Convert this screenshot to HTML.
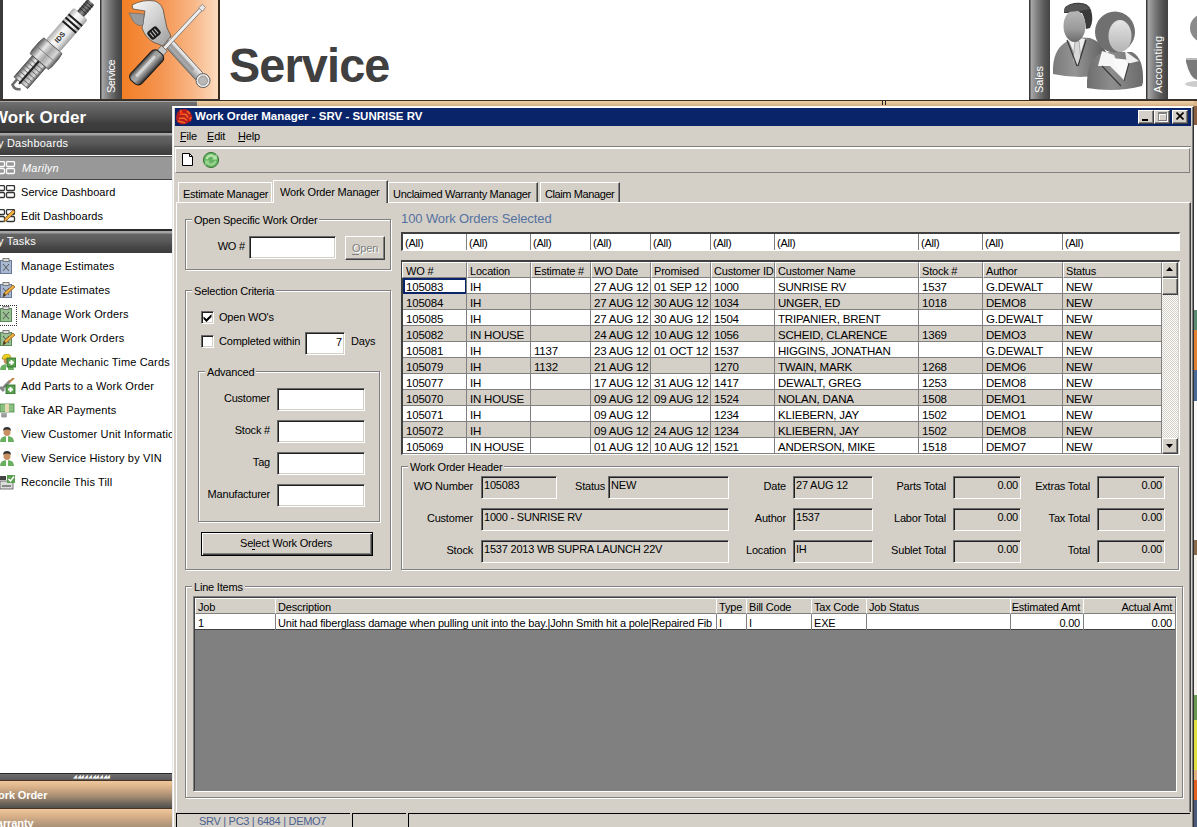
<!DOCTYPE html>
<html><head><meta charset="utf-8"><style>
*{margin:0;padding:0;box-sizing:border-box}
html,body{width:1197px;height:827px;overflow:hidden;background:#fff}
body{position:relative;font-family:"Liberation Sans",sans-serif;font-size:11px;color:#000}
.a{position:absolute}
.t{position:absolute;white-space:nowrap;line-height:1}
.strip{position:absolute;top:0;height:99px;background:linear-gradient(90deg,#3a3a3a 0,#3a3a3a 1px,#a8a8a8 2px,#7a7a7a 9px,#555 16px,#444 21px)}
.vt{position:absolute;transform-origin:0 0;transform:rotate(-90deg);color:#fff;font-size:11px;white-space:nowrap;line-height:11px}
.sunk{position:absolute;background:#fff;border-top:1px solid #6a6a6a;border-left:1px solid #6a6a6a;border-bottom:1px solid #fff;border-right:1px solid #fff;box-shadow:inset 1px 1px 0 #202020,inset -1px -1px 0 #d4d0c8}
.btn{position:absolute;background:#d4d0c8;border-top:1px solid #fff;border-left:1px solid #fff;border-right:1px solid #404040;border-bottom:1px solid #404040;box-shadow:inset -1px -1px 0 #808080;text-align:center}
</style></head><body>
<div class="a" style="left:0;top:0;width:3px;height:100px;background:#3a3a3a"></div>
<div class="a" style="left:3px;top:0;width:97px;height:99px;background:#fff"></div>
<svg class="a" style="left:3px;top:0" width="97" height="99" viewBox="0 0 97 99">
<defs>
<linearGradient id="gm" x1="0" x2="1"><stop offset="0" stop-color="#5a5a5a"/><stop offset=".3" stop-color="#e8e8e8"/><stop offset=".55" stop-color="#a8a8a8"/><stop offset=".8" stop-color="#d8d8d8"/><stop offset="1" stop-color="#555"/></linearGradient>
<linearGradient id="gc" x1="0" x2="1"><stop offset="0" stop-color="#b0b0b0"/><stop offset=".35" stop-color="#fafafa"/><stop offset=".7" stop-color="#e8e8e8"/><stop offset="1" stop-color="#a0a0a0"/></linearGradient>
<linearGradient id="gt" x1="0" x2="1"><stop offset="0" stop-color="#333"/><stop offset=".5" stop-color="#8a8a8a"/><stop offset="1" stop-color="#333"/></linearGradient>
</defs>
<g transform="translate(48 48) rotate(41)">
<rect x="-4.5" y="-61" width="9" height="17" rx="1.5" fill="url(#gt)"/>
<path d="M-4.5 -58 H4.5 M-4.5 -55 H4.5 M-4.5 -52 H4.5 M-4.5 -49 H4.5" stroke="#222" stroke-width=".8"/>
<rect x="-9" y="-45" width="18" height="42" rx="2" fill="url(#gc)" stroke="#a0a0a0" stroke-width=".6"/>
<rect x="-9" y="-38" width="18" height="2" fill="#1a1a1a"/>
<rect x="-9" y="-33.5" width="18" height="2" fill="#1a1a1a"/>
<rect x="-9" y="-29" width="18" height="2" fill="#1a1a1a"/>
<text x="0" y="-12" font-size="7" font-weight="bold" text-anchor="middle" fill="#222" transform="rotate(-90 0 -14)" font-family="Liberation Sans">IDS</text>
<path d="M-12 -3 L12 -3 L13 3 L13 14 L12 18 L-12 18 L-13 14 L-13 3 Z" fill="url(#gm)" stroke="#555" stroke-width=".8"/>
<path d="M-13 8 H13" stroke="#777" stroke-width=".8"/>
<rect x="-9" y="18" width="18" height="28" fill="url(#gm)" stroke="#444" stroke-width=".8"/>
<path d="M-9 22 H9 M-9 26 H9 M-9 30 H9 M-9 34 H9 M-9 38 H9 M-9 42 H9" stroke="#666" stroke-width=".9"/>
<rect x="-1.5" y="18" width="2" height="30" fill="#222"/>
<path d="M-5 46 L-5 53 Q0 56 4 51" fill="none" stroke="#6a6a6a" stroke-width="2.6"/>
</g></svg>
<div class="strip" style="left:100px;width:22px"></div>
<div class="vt" style="left:106px;top:93px;letter-spacing:-0.5px">Service</div>
<div class="a" style="left:122px;top:0;width:96px;height:99px;background:linear-gradient(90deg,#f27f25,#f59450 40%,#f8b888 75%,#fcdcc0)"></div>
<svg class="a" style="left:121px;top:0" width="97" height="99" viewBox="0 0 97 99">
<defs>
<linearGradient id="gw" x1="0" y1="0" x2="0" y2="1"><stop offset="0" stop-color="#f4f4f4"/><stop offset=".45" stop-color="#c8c8c8"/><stop offset="1" stop-color="#8a8a8a"/></linearGradient>
<linearGradient id="gwh" x1="0" y1="0" x2="1" y2="1"><stop offset="0" stop-color="#fafafa"/><stop offset=".5" stop-color="#d0d0d0"/><stop offset="1" stop-color="#9a9a9a"/></linearGradient>
<linearGradient id="gh" x1="0" y1="0" x2="0" y2="1"><stop offset="0" stop-color="#3a3a3a"/><stop offset=".25" stop-color="#9a9a9a"/><stop offset=".55" stop-color="#a8a8a8"/><stop offset=".8" stop-color="#6a6a6a"/><stop offset="1" stop-color="#2a2a2a"/></linearGradient>
</defs>
<g transform="translate(36 30) rotate(47.7)">
<rect x="6" y="-5" width="58" height="10" rx="2" fill="url(#gw)" stroke="#5a5a5a" stroke-width=".8"/>
<rect x="14" y="-1.5" width="40" height="3" fill="#a0a0a0"/>
<circle cx="68.4" cy="0" r="7" fill="#e8e8e8" stroke="#5a5a5a" stroke-width=".9"/>
<circle cx="68.4" cy="0" r="4.5" fill="#b8b8b8" stroke="#777" stroke-width=".6"/>
</g>
<path d="M11 5 Q22 -1 34 1 Q42 4 43 14 L46 28 L50 36 L42 46 L32 42 Q24 37 21 28 L23 17 L24 11 L12 9 Z" fill="url(#gwh)" stroke="#6a5a4a" stroke-width=".9"/>
<path d="M8 13 L23 14 L22 25 Q17 27 12 21 Z" fill="#9a9a9a" stroke="#6a6a6a" stroke-width=".7"/>
<g transform="translate(33 33) rotate(-40)"><rect x="-6" y="-5" width="12" height="10" rx="2.5" fill="#1a1a1a"/><path d="M-3 -3 V3 M0 -3 V3 M3 -3 V3" stroke="#bbb" stroke-width="1.1"/></g>
<g transform="translate(12 82) rotate(-47)">
<rect x="44" y="-1.8" width="56" height="3.6" fill="#ececec" stroke="#6a6a6a" stroke-width=".7"/>
<path d="M99 -2.6 L104 -2.2 L104 2.2 L99 2.6 Z" fill="#e8e8e8" stroke="#6a6a6a" stroke-width=".6"/>
<rect x="39" y="-4" width="7" height="8" fill="#c8c8c8" stroke="#555" stroke-width=".7"/>
<rect x="0" y="-7.5" width="40" height="15" rx="5" fill="url(#gh)" stroke="#1a1a1a" stroke-width="1"/>
<rect x="6" y="-3" width="28" height="3" rx="1.5" fill="#e0e0e0" opacity=".8"/>
</g></svg>
<div class="a" style="left:218px;top:0;width:2px;height:100px;background:#3a2a1a"></div>
<div class="t" style="left:229px;top:41px;font-size:49px;font-weight:bold;color:#404040;letter-spacing:-0.9px;transform:scaleX(0.955);transform-origin:0 0">Service</div>
<div class="strip" style="left:1029px;width:21px"></div>
<div class="vt" style="left:1034px;top:93px;letter-spacing:-0.1px">Sales</div>
<div class="a" style="left:1050px;top:0;width:96px;height:99px;background:#fff"></div>
<svg class="a" style="left:1050px;top:0" width="96" height="99" viewBox="0 0 96 99">
<defs>
<linearGradient id="gfm" x1="0" y1="0" x2="0" y2="1"><stop offset="0" stop-color="#b8b8b8"/><stop offset=".6" stop-color="#9a9a9a"/><stop offset="1" stop-color="#6a6a6a"/></linearGradient>
<linearGradient id="gfw" x1="0" y1="0" x2="0" y2="1"><stop offset="0" stop-color="#e4e4e4"/><stop offset="1" stop-color="#b4b4b4"/></linearGradient>
<linearGradient id="gbm" x1="0" x2="1"><stop offset="0" stop-color="#7a7a7a"/><stop offset=".4" stop-color="#959595"/><stop offset="1" stop-color="#5a5a5a"/></linearGradient>
<linearGradient id="gbw" x1="0" x2="1"><stop offset="0" stop-color="#6e6e6e"/><stop offset=".45" stop-color="#8e8e8e"/><stop offset="1" stop-color="#6a6a6a"/></linearGradient>
</defs>
<path d="M3 74 Q2 50 16 42 L26 37 L40 38 Q52 42 56 52 L58 74 Q30 80 3 74 Z" fill="url(#gbm)"/>
<path d="M18 39 L26 37 L35 39 L28 62 Z" fill="#f0f0f0"/>
<path d="M25 41 L29 41 L31 60 L27 66 L23 60 Z" fill="#d8d8d8" stroke="#888" stroke-width=".6"/>
<path d="M17 40 L27 66 M36 40 L28 66" stroke="#3a3a3a" stroke-width="1.2" fill="none"/>
<path d="M14 13 Q13 5 24 3 Q38 1 41 10 Q44 20 40 28 L36 29 Q35 18 32 13 L16 13 Z" fill="#3a3a3a"/>
<ellipse cx="24.5" cy="26" rx="11" ry="16" fill="url(#gfm)"/>
<path d="M14 12 Q13 6 24 4 Q36 3 40 9 Q32 11 16 12 Z" fill="#555"/>
<path d="M37 88 Q36 60 50 54 L60 52 L82 52 Q94 58 93 82 L92 86 Q66 93 37 88 Z" fill="url(#gbw)"/>
<path d="M48 66 L52 51 L64 55 L74 80 L60 66 Z" fill="#f6f6f6"/><path d="M62 58 L74 81 L80 60 Z" fill="#fafafa"/><path d="M75 51 L89 61 L77 64 Z" fill="#f0f0f0"/>
<path d="M52 66 L71 86 M74 81 L79 63" stroke="#3a3a3a" stroke-width="1.1" fill="none"/>
<ellipse cx="65" cy="32" rx="20" ry="20.5" fill="#707070"/>
<ellipse cx="70" cy="36" rx="11.5" ry="16" fill="url(#gfw)"/>
</svg>
<div class="strip" style="left:1146px;width:22px"></div>
<div class="vt" style="left:1153px;top:93px;letter-spacing:0.3px">Accounting</div>
<svg class="a" style="left:1168px;top:0" width="29" height="99" viewBox="0 0 29 99">
<circle cx="36" cy="28" r="14" fill="#8a8a8a"/>
<path d="M18 58 H29 V80 Q22 78 18 62 Z" fill="#7a7a7a"/>
<rect x="18" y="58" width="11" height="2" fill="#bbb"/>
<ellipse cx="29" cy="84" rx="12" ry="3" fill="#ccc"/>
</svg>
<div class="a" style="left:0;top:100px;width:1197px;height:1px;background:#3a2e24"></div>
<div class="a" style="left:0;top:99px;width:220px;height:1px;background:#3a3430"></div>
<div class="a" style="left:1029px;top:99px;width:168px;height:1px;background:#3a3430"></div>
<div class="a" style="left:0;top:101px;width:197px;height:726px;background:#fff"></div>
<div class="a" style="left:197px;top:101px;width:1000px;height:5px;background:linear-gradient(#f2d4a8,#d2ae86)"></div><div class="a" style="left:197px;top:106px;width:1000px;height:1px;background:#fffaf0"></div>
<div class="a" style="left:196px;top:101px;width:1px;height:5px;background:#000"></div>
<div class="a" style="left:882px;top:101px;width:1px;height:4px;background:#222"></div>
<div class="a" style="left:885px;top:101px;width:1px;height:4px;background:#222"></div>
<div class="a" style="left:0;top:101px;width:197px;height:30px;background:linear-gradient(#a8a8a8 0,#a8a8a8 1px,#707070 1px,#5e5e5e 30%,#4e4e4e 55%,#3e3e3e 75%,#3a3a3a)"></div>
<div class="t" style="left:-8px;top:109px;font-size:17px;font-weight:bold;color:#fff;letter-spacing:0.1px">Work Order</div>
<div class="a" style="left:0;top:131px;width:197px;height:2px;background:#2a2a2a"></div>
<div class="a" style="left:0;top:133px;width:197px;height:22px;background:linear-gradient(#a4a4a4 0,#a4a4a4 2px,#646464 3px,#5a5a5a 45%,#484848 70%,#3c3c3c)"></div>
<div class="t" style="left:-2px;top:138px;font-size:11px;color:#fff;letter-spacing:0.2px">y Dashboards</div>
<div class="a" style="left:0;top:155px;width:197px;height:2px;background:#fff"></div>
<div class="a" style="left:0;top:156px;width:197px;height:1px;background:#555"></div>
<div class="a" style="left:0;top:157px;width:197px;height:22px;background:#989898"></div>
<div class="a" style="left:0;top:179px;width:197px;height:1px;background:#444"></div>
<svg class="a" style="left:0px;top:161px" width="16" height="14" viewBox="0 0 16 14"><rect x="-3.5" y="0.5" width="8" height="5" rx="1.2" fill="none" stroke="#fff" stroke-width="1.3"/><rect x="6.5" y="0.5" width="8" height="5" rx="1.2" fill="none" stroke="#fff" stroke-width="1.3"/><rect x="-3.5" y="7.5" width="8" height="5" rx="1.2" fill="none" stroke="#fff" stroke-width="1.3"/><rect x="6.5" y="7.5" width="8" height="5" rx="1.2" fill="none" stroke="#fff" stroke-width="1.3"/></svg>
<div class="t" style="left:22px;top:163px;font-size:11px;font-style:italic;color:#fff;letter-spacing:0.2px">Marilyn</div>
<svg class="a" style="left:0px;top:185px" width="16" height="14" viewBox="0 0 16 14"><rect x="-3.5" y="0.5" width="8" height="5" rx="1.2" fill="none" stroke="#333" stroke-width="1.3"/><rect x="6.5" y="0.5" width="8" height="5" rx="1.2" fill="none" stroke="#333" stroke-width="1.3"/><rect x="-3.5" y="7.5" width="8" height="5" rx="1.2" fill="none" stroke="#333" stroke-width="1.3"/><rect x="6.5" y="7.5" width="8" height="5" rx="1.2" fill="none" stroke="#333" stroke-width="1.3"/></svg>
<div class="t" style="left:21px;top:187px;font-size:11px;letter-spacing:0.05px">Service Dashboard</div>
<svg class="a" style="left:0px;top:209px" width="16" height="14" viewBox="0 0 16 14"><rect x="-3.5" y="0.5" width="8" height="5" rx="1.2" fill="none" stroke="#333" stroke-width="1.3"/><rect x="6.5" y="0.5" width="8" height="5" rx="1.2" fill="none" stroke="#333" stroke-width="1.3"/><rect x="-3.5" y="7.5" width="8" height="5" rx="1.2" fill="none" stroke="#333" stroke-width="1.3"/><rect x="6.5" y="7.5" width="8" height="5" rx="1.2" fill="none" stroke="#333" stroke-width="1.3"/></svg>
<svg class="a" style="left:0;top:207px" width="16" height="16" viewBox="0 0 16 16"><path d="M4 15 L5 11 L13 3 L15 5 L7 13 Z" fill="#f0b040" stroke="#8a5a20" stroke-width=".8"/></svg>
<div class="t" style="left:21px;top:211px;font-size:11px;letter-spacing:0.05px">Edit Dashboards</div>
<div class="a" style="left:0;top:229px;width:197px;height:2px;background:#2a2a2a"></div>
<div class="a" style="left:0;top:231px;width:197px;height:22px;background:linear-gradient(#a4a4a4 0,#a4a4a4 2px,#646464 3px,#5a5a5a 45%,#484848 70%,#3c3c3c)"></div>
<div class="t" style="left:-2px;top:236px;font-size:11px;color:#fff;letter-spacing:0.2px">y Tasks</div>
<svg class="a" style="left:0;top:258px" width="16" height="16" viewBox="0 0 16 16"><rect x="0.5" y="2.5" width="11" height="13" fill="#a8b8d0" stroke="#6a7a9a"/><rect x="3" y="0.5" width="6" height="3" fill="#ddd" stroke="#666" stroke-width=".8"/><path d="M3 6 L9 13 M9 6 L3 13" stroke="#555" stroke-width="1"/></svg>
<div class="t" style="left:21px;top:261px;font-size:11px;letter-spacing:0.15px">Manage Estimates</div>
<svg class="a" style="left:0;top:282px" width="16" height="16" viewBox="0 0 16 16"><rect x="0.5" y="2.5" width="11" height="13" fill="#a8b8d0" stroke="#6a7a9a"/><rect x="3" y="0.5" width="6" height="3" fill="#ddd" stroke="#666" stroke-width=".8"/><path d="M3 6 L9 13 M9 6 L3 13" stroke="#555" stroke-width="1"/><path d="M3 15 L4 11 L13 3 L15 5 L6 13 Z" fill="#f0b040" stroke="#8a5a20" stroke-width=".8"/><path d="M3 15 L4 11 L6 13 Z" fill="#333"/></svg>
<div class="t" style="left:21px;top:285px;font-size:11px;letter-spacing:0.15px">Update Estimates</div>
<svg class="a" style="left:0;top:306px" width="16" height="16" viewBox="0 0 16 16"><rect x="0.5" y="2.5" width="11" height="13" fill="#98c090" stroke="#5a8a5a"/><rect x="3" y="0.5" width="6" height="3" fill="#ddd" stroke="#666" stroke-width=".8"/><path d="M3 6 L9 13 M9 6 L3 13" stroke="#555" stroke-width="1"/></svg>
<div class="t" style="left:21px;top:309px;font-size:11px;letter-spacing:0.15px">Manage Work Orders</div>
<svg class="a" style="left:0;top:330px" width="16" height="16" viewBox="0 0 16 16"><rect x="0.5" y="2.5" width="11" height="13" fill="#98c090" stroke="#5a8a5a"/><rect x="3" y="0.5" width="6" height="3" fill="#ddd" stroke="#666" stroke-width=".8"/><path d="M3 6 L9 13 M9 6 L3 13" stroke="#555" stroke-width="1"/><path d="M3 15 L4 11 L13 3 L15 5 L6 13 Z" fill="#f0b040" stroke="#8a5a20" stroke-width=".8"/><path d="M3 15 L4 11 L6 13 Z" fill="#333"/></svg>
<div class="t" style="left:21px;top:333px;font-size:11px;letter-spacing:0.15px">Update Work Orders</div>
<svg class="a" style="left:0;top:354px" width="16" height="16" viewBox="0 0 16 16"><path d="M0 16 Q0 10 7 10 Q14 10 14 16 Z" fill="#6ab060"/><rect x="6" y="10" width="2" height="6" fill="#fff"/><ellipse cx="7" cy="6" rx="3.5" ry="4" fill="#c89060"/><path d="M2 5 Q3 0 7 0 Q11 0 11 5 Z" fill="#f0d020" stroke="#a08000" stroke-width=".6"/><rect x="7" y="4" width="9" height="9" fill="#5aa050" stroke="#2a6a2a" stroke-width=".8"/><path d="M9 8.5 h5 M11.5 6 v5" stroke="#fff" stroke-width="1.8"/></svg>
<div class="t" style="left:21px;top:357px;font-size:11px;letter-spacing:0.15px">Update Mechanic Time Cards</div>
<svg class="a" style="left:0;top:378px" width="16" height="16" viewBox="0 0 16 16"><path d="M1 12 L10 3 M0 9 L4 13" stroke="#888" stroke-width="3"/><path d="M9 4 L14 0" stroke="#c08040" stroke-width="2"/><rect x="6" y="7" width="9" height="9" fill="#5aa050" stroke="#2a6a2a" stroke-width=".8"/><path d="M8 11.5 h5 M10.5 9 v5" stroke="#fff" stroke-width="1.8"/></svg>
<div class="t" style="left:21px;top:381px;font-size:11px;letter-spacing:0.15px">Add Parts to a Work Order</div>
<svg class="a" style="left:0;top:402px" width="16" height="16" viewBox="0 0 16 16"><rect x="0" y="2" width="14" height="8" fill="#8ac080" stroke="#4a8a4a" stroke-width=".8"/><rect x="5" y="2" width="4" height="8" fill="#e8d8b0"/><ellipse cx="4" cy="12" rx="3" ry="1.5" fill="#aaa"/><ellipse cx="4" cy="14" rx="3" ry="1.5" fill="#999"/></svg>
<div class="t" style="left:21px;top:405px;font-size:11px;letter-spacing:0.15px">Take AR Payments</div>
<svg class="a" style="left:0;top:426px" width="16" height="16" viewBox="0 0 16 16"><path d="M0 16 Q0 10 7 10 Q14 10 14 16 Z" fill="#6ab060"/><rect x="6" y="10" width="2" height="6" fill="#fff"/><ellipse cx="7" cy="6" rx="3.5" ry="4" fill="#c89060"/><path d="M3 5 Q3 1 7 1 Q11 1 11 5 L10 4 Q7 3 4 4 Z" fill="#333"/></svg>
<div class="t" style="left:21px;top:429px;font-size:11px;letter-spacing:0.15px">View Customer Unit Information</div>
<svg class="a" style="left:0;top:450px" width="16" height="16" viewBox="0 0 16 16"><path d="M0 16 Q0 10 7 10 Q14 10 14 16 Z" fill="#6ab060"/><rect x="6" y="10" width="2" height="6" fill="#fff"/><ellipse cx="7" cy="6" rx="3.5" ry="4" fill="#c89060"/><path d="M3 5 Q3 1 7 1 Q11 1 11 5 L10 4 Q7 3 4 4 Z" fill="#333"/></svg>
<div class="t" style="left:21px;top:453px;font-size:11px;letter-spacing:0.15px">View Service History by VIN</div>
<svg class="a" style="left:0;top:474px" width="16" height="16" viewBox="0 0 16 16"><rect x="0" y="7" width="13" height="8" fill="#ddd" stroke="#555" stroke-width=".8"/><rect x="0" y="2" width="6" height="4" fill="#444"/><rect x="7" y="1" width="8" height="8" fill="#5aa050"/><path d="M8.5 5 L10.5 7 L14 2.5" stroke="#fff" stroke-width="1.5" fill="none"/><path d="M2 12 H11" stroke="#333"/></svg>
<div class="t" style="left:21px;top:477px;font-size:11px;letter-spacing:0.15px">Reconcile This Till</div>
<div class="a" style="left:0;top:305px;width:17px;height:21px;border:1px dotted #333;border-left:none"></div>
<div class="a" style="left:0;top:773px;width:197px;height:1px;background:#2a2a2a"></div>
<div class="a" style="left:0;top:774px;width:197px;height:6px;background:linear-gradient(#6e6e6e,#5a5a5a)"></div>
<div class="t" style="left:73px;top:775px;font-size:4.5px;color:#fff;letter-spacing:-0.3px">&#9698;&#9698;&#9698;&#9698;&#9698;&#9698;&#9698;&#9698;&#9698;&#9698;</div>
<div class="a" style="left:0;top:780px;width:197px;height:1px;background:#4a3424"></div>
<div class="a" style="left:0;top:781px;width:197px;height:27px;background:linear-gradient(#f0c8a0,#d8b088 25%,#a08870 60%,#6a625a 85%,#50504e)"></div>
<div class="t" style="left:-12px;top:790px;font-size:11px;font-weight:bold;color:#fff;letter-spacing:-0.1px">Work Order</div>
<div class="a" style="left:0;top:808px;width:197px;height:1px;background:#4a3424"></div>
<div class="a" style="left:0;top:809px;width:197px;height:18px;background:linear-gradient(#f0c8a0,#d8b088 40%,#a89078)"></div>
<div class="t" style="left:-13px;top:818px;font-size:11px;font-weight:bold;color:#fff;letter-spacing:-0.1px">Warranty</div>
<div class="a" style="left:1194px;top:101px;width:3px;height:5px;background:#d8b488"></div>
<div class="a" style="left:1194px;top:106px;width:3px;height:19px;background:#8a6040"></div>
<div class="a" style="left:1194px;top:125px;width:3px;height:185px;background:#fff"></div>
<div class="a" style="left:1194px;top:310px;width:3px;height:20px;background:#5a8a70"></div>
<div class="a" style="left:1194px;top:330px;width:3px;height:40px;background:#e08030"></div>
<div class="a" style="left:1194px;top:370px;width:3px;height:31px;background:#4a6a9a"></div>
<div class="a" style="left:1194px;top:401px;width:3px;height:139px;background:#fafafa"></div>
<div class="a" style="left:1194px;top:540px;width:3px;height:15px;background:#8a6a4a"></div>
<div class="a" style="left:1194px;top:555px;width:3px;height:140px;background:#f4f0ea"></div>
<div class="a" style="left:1194px;top:695px;width:3px;height:25px;background:#6a9a50"></div>
<div class="a" style="left:1194px;top:720px;width:3px;height:50px;background:#e0e040"></div>
<div class="a" style="left:1194px;top:770px;width:3px;height:10px;background:#e0b080"></div>
<div class="a" style="left:1194px;top:780px;width:3px;height:20px;background:#e06020"></div>
<div class="a" style="left:1194px;top:800px;width:3px;height:27px;background:#4a5a7a"></div>
<div class="a" style="left:172px;top:106px;width:1022px;height:721px;background:#d4d0c8;border-left:1px solid #e8e8e8;border-top:1px solid #fffaf0;border-right:1px solid #303030"></div>
<div class="a" style="left:173px;top:107px;width:1019px;height:1px;background:#fff"></div>
<div class="a" style="left:173px;top:107px;width:1px;height:720px;background:#fff"></div>
<div class="a" style="left:1192px;top:107px;width:1px;height:720px;background:#808080"></div>
<div class="a" style="left:175px;top:108px;width:1016px;height:18px;background:#0a246a"></div>
<div class="t" style="left:195px;top:111px;font-size:11.5px;font-weight:bold;color:#fff">Work Order Manager - SRV - SUNRISE RV</div>
<svg class="a" style="left:175px;top:108px" width="19" height="18" viewBox="0 0 19 18"><path d="M2 5 L5 1.5 L11 1 L15 3.5 L17.5 9 L16 13 L11 16 L6 16.5 L2 14 L1 10 Z" fill="#b81c20"/><path d="M6 2 L6 6 L11 6.5 L13 9.5 M4 10.5 L9 10 L12 12.5 M3 13 L7 14 L10 15 M12 3 L15 6 M14 11 L16.5 9.5" stroke="#f06a20" stroke-width="1.6" fill="none"/><circle cx="15" cy="12" r="1.2" fill="#ff2010"/><circle cx="7" cy="5" r="1.2" fill="#ff2010"/></svg>
<div class="btn" style="left:1138px;top:110px;width:16px;height:14px"></div>
<div class="btn" style="left:1154px;top:110px;width:16px;height:14px"></div>
<div class="btn" style="left:1172px;top:110px;width:16px;height:14px"></div>
<div class="a" style="left:1142px;top:119px;width:6px;height:2px;background:#000"></div>
<div class="a" style="left:1159px;top:113px;width:9px;height:9px;border:1px solid #fff;border-top-width:2px"></div>
<div class="a" style="left:1158px;top:112px;width:9px;height:9px;border:1px solid #808080;border-top-width:2px"></div>
<svg class="a" style="left:1176px;top:112px" width="8" height="8" viewBox="0 0 8 8"><path d="M0.5 0.5 L7.5 7.5 M7.5 0.5 L0.5 7.5" stroke="#000" stroke-width="1.6"/></svg>
<div class="t" style="left:180px;top:131px;letter-spacing:-0.2px">File</div>
<div class="a" style="left:180px;top:141px;width:6px;height:1px;background:#000"></div>
<div class="t" style="left:207px;top:131px;letter-spacing:-0.2px">Edit</div>
<div class="a" style="left:207px;top:141px;width:6px;height:1px;background:#000"></div>
<div class="t" style="left:238px;top:131px;letter-spacing:-0.2px">Help</div>
<div class="a" style="left:238px;top:141px;width:7px;height:1px;background:#000"></div>
<div class="a" style="left:174px;top:146px;width:1017px;height:1px;background:#808080"></div>
<div class="a" style="left:174px;top:147px;width:1017px;height:1px;background:#fff"></div>
<div class="a" style="left:175px;top:148px;width:1015px;height:25px;border-left:1px solid #fff;border-top:1px solid #fff;border-right:1px solid #808080;border-bottom:1px solid #808080"></div>
<svg class="a" style="left:181px;top:152px" width="13" height="15" viewBox="0 0 13 15"><path d="M1.5 1.5 H8.5 L11.5 4.5 V13.5 H1.5 Z" fill="#fff" stroke="#000"/><path d="M8.5 1.5 V4.5 H11.5" fill="none" stroke="#000"/></svg>
<svg class="a" style="left:202px;top:151px" width="18" height="18" viewBox="0 0 18 18"><circle cx="9" cy="9" r="7.6" fill="#62b060" stroke="#3a7a3a" stroke-width="1"/><path d="M3.5 8 A5.5 5.5 0 0 1 13 5 L14.5 3.5 L15 8.5 L10 8.5 L11.5 7 A3.5 3.5 0 0 0 5.5 8.5 Z" fill="#b4e4a8"/><path d="M14.5 10 A5.5 5.5 0 0 1 5 13 L3.5 14.5 L3 9.5 L8 9.5 L6.5 11 A3.5 3.5 0 0 0 12.5 9.5 Z" fill="#98d48c"/></svg>
<div class="a" style="left:176px;top:202px;width:1015px;height:611px;border-left:1px solid #fff;border-top:1px solid #fff;border-right:1px solid #404040;box-shadow:inset -1px 0 0 #808080"></div>
<div class="a" style="left:178px;top:182px;width:94px;height:20px;border-left:1px solid #fff;border-top:1px solid #fff;border-right:1px solid #fff"></div>
<div class="t" style="left:183px;top:189px;letter-spacing:-0.25px">Estimate Manager</div>
<div class="a" style="left:273px;top:180px;width:115px;height:23px;background:#d4d0c8;border-left:1px solid #fff;border-top:1px solid #fff;border-right:1px solid #404040;box-shadow:inset -1px 0 0 #808080"></div>
<div class="t" style="left:280px;top:187px;letter-spacing:-0.2px">Work Order Manager</div>
<div class="a" style="left:388px;top:182px;width:150px;height:20px;border-left:1px solid #fff;border-top:1px solid #fff;border-right:1px solid #404040;box-shadow:inset -1px 0 0 #808080"></div>
<div class="t" style="left:393px;top:189px;letter-spacing:-0.3px">Unclaimed Warranty Manager</div>
<div class="a" style="left:540px;top:182px;width:80px;height:20px;border-left:1px solid #fff;border-top:1px solid #fff;border-right:1px solid #404040;box-shadow:inset -1px 0 0 #808080"></div>
<div class="t" style="left:545px;top:189px;letter-spacing:-0.4px">Claim Manager</div>
<div class="a" style="left:185px;top:219px;width:206px;height:51px;border:1px solid #808080;box-shadow:inset 1px 1px 0 #fff,1px 1px 0 #fff"></div>
<div class="t" style="left:192px;top:214px;background:#d4d0c8;padding:0 2px;letter-spacing:-0.2px;line-height:12px">Open Specific Work Order</div>
<div class="t" style="right:952px;top:241px;letter-spacing:-0.2px;">WO #</div>
<div class="sunk" style="left:249px;top:236px;width:87px;height:23px;background:#fff"></div>
<div class="btn" style="left:345px;top:236px;width:40px;height:24px"></div>
<div class="t" style="left:352px;top:243px;letter-spacing:-0.2px;color:#808080;text-shadow:1px 1px 0 #fff">Open</div>
<div class="a" style="left:352px;top:254px;width:7px;height:1px;background:#808080"></div>
<div class="a" style="left:185px;top:290px;width:206px;height:280px;border:1px solid #808080;box-shadow:inset 1px 1px 0 #fff,1px 1px 0 #fff"></div>
<div class="t" style="left:192px;top:285px;background:#d4d0c8;padding:0 2px;letter-spacing:-0.2px;line-height:12px">Selection Criteria</div>
<div class="sunk" style="left:201px;top:311px;width:13px;height:13px;background:#fff"></div>
<svg class="a" style="left:203px;top:313px" width="9" height="9" viewBox="0 0 9 9"><path d="M0.5 3.5 L3.5 6 L8.5 1 L8.5 4 L3.5 9 L0.5 6 Z" fill="#000"/></svg>
<div class="t" style="left:219px;top:312px;letter-spacing:-0.2px;">Open WO's</div>
<div class="sunk" style="left:201px;top:335px;width:13px;height:13px;background:#fff"></div>
<div class="t" style="left:219px;top:336px;letter-spacing:-0.2px;">Completed within</div>
<div class="sunk" style="left:305px;top:332px;width:40px;height:23px;background:#fff"></div>
<div class="t" style="right:855px;top:337px;letter-spacing:-0.2px;">7</div>
<div class="t" style="left:351px;top:336px;letter-spacing:-0.2px;">Days</div>
<div class="a" style="left:198px;top:371px;width:182px;height:151px;border:1px solid #808080;box-shadow:inset 1px 1px 0 #fff,1px 1px 0 #fff"></div>
<div class="t" style="left:205px;top:366px;background:#d4d0c8;padding:0 2px;letter-spacing:-0.2px;line-height:12px">Advanced</div>
<div class="t" style="right:927px;top:393px;letter-spacing:-0.2px;">Customer</div>
<div class="sunk" style="left:277px;top:388px;width:88px;height:23px;background:#fff"></div>
<div class="t" style="right:927px;top:425px;letter-spacing:-0.2px;">Stock #</div>
<div class="sunk" style="left:277px;top:420px;width:88px;height:23px;background:#fff"></div>
<div class="t" style="right:927px;top:457px;letter-spacing:-0.2px;">Tag</div>
<div class="sunk" style="left:277px;top:452px;width:88px;height:23px;background:#fff"></div>
<div class="t" style="right:927px;top:489px;letter-spacing:-0.2px;">Manufacturer</div>
<div class="sunk" style="left:277px;top:484px;width:88px;height:23px;background:#fff"></div>
<div class="a" style="left:201px;top:532px;width:172px;height:24px;background:#d4d0c8;border:1px solid #000;box-shadow:inset 1px 1px 0 #fff,inset -1px -1px 0 #404040,inset -2px -2px 0 #808080"></div>
<div class="t" style="left:240px;top:538px;letter-spacing:-0.2px;">Select Work Orders</div>
<div class="a" style="left:252px;top:549px;width:3px;height:1px;background:#000"></div>
<div class="t" style="left:401px;top:212px;font-size:13px;color:#5472a0;letter-spacing:-0.1px">100 Work Orders Selected</div>
<div class="a" style="left:401px;top:232px;width:779px;height:19px;background:#fff;border-top:2px solid #404040;border-left:2px solid #404040;border-bottom:1px solid #fff;border-right:1px solid #fff"></div>
<div class="t" style="left:405px;top:238px;letter-spacing:-0.2px;">(All)</div>
<div class="a" style="left:466px;top:234px;width:1px;height:16px;background:#808080"></div>
<div class="t" style="left:469px;top:238px;letter-spacing:-0.2px;">(All)</div>
<div class="a" style="left:530px;top:234px;width:1px;height:16px;background:#808080"></div>
<div class="t" style="left:533px;top:238px;letter-spacing:-0.2px;">(All)</div>
<div class="a" style="left:590px;top:234px;width:1px;height:16px;background:#808080"></div>
<div class="t" style="left:593px;top:238px;letter-spacing:-0.2px;">(All)</div>
<div class="a" style="left:650px;top:234px;width:1px;height:16px;background:#808080"></div>
<div class="t" style="left:653px;top:238px;letter-spacing:-0.2px;">(All)</div>
<div class="a" style="left:710px;top:234px;width:1px;height:16px;background:#808080"></div>
<div class="t" style="left:713px;top:238px;letter-spacing:-0.2px;">(All)</div>
<div class="a" style="left:774px;top:234px;width:1px;height:16px;background:#808080"></div>
<div class="t" style="left:777px;top:238px;letter-spacing:-0.2px;">(All)</div>
<div class="a" style="left:918px;top:234px;width:1px;height:16px;background:#808080"></div>
<div class="t" style="left:921px;top:238px;letter-spacing:-0.2px;">(All)</div>
<div class="a" style="left:982px;top:234px;width:1px;height:16px;background:#808080"></div>
<div class="t" style="left:985px;top:238px;letter-spacing:-0.2px;">(All)</div>
<div class="a" style="left:1062px;top:234px;width:1px;height:16px;background:#808080"></div>
<div class="t" style="left:1065px;top:238px;letter-spacing:-0.2px;">(All)</div>
<div class="a" style="left:401px;top:260px;width:779px;height:195px;background:#d4d0c8;border-top:2px solid #404040;border-left:2px solid #404040;border-bottom:1px solid #fff;border-right:1px solid #fff"></div>
<div class="a" style="left:402px;top:262px;width:65px;height:16px;border-top:1px solid #fff;border-left:1px solid #fff;border-right:1px solid #808080;border-bottom:1px solid #808080"></div>
<div class="t" style="left:406px;top:266px;letter-spacing:-0.2px;">WO #</div>
<div class="a" style="left:467px;top:262px;width:64px;height:16px;border-top:1px solid #fff;border-left:1px solid #fff;border-right:1px solid #808080;border-bottom:1px solid #808080"></div>
<div class="t" style="left:470px;top:266px;letter-spacing:-0.2px;">Location</div>
<div class="a" style="left:531px;top:262px;width:60px;height:16px;border-top:1px solid #fff;border-left:1px solid #fff;border-right:1px solid #808080;border-bottom:1px solid #808080"></div>
<div class="t" style="left:534px;top:266px;letter-spacing:-0.2px;">Estimate #</div>
<div class="a" style="left:591px;top:262px;width:60px;height:16px;border-top:1px solid #fff;border-left:1px solid #fff;border-right:1px solid #808080;border-bottom:1px solid #808080"></div>
<div class="t" style="left:594px;top:266px;letter-spacing:-0.2px;">WO Date</div>
<div class="a" style="left:651px;top:262px;width:60px;height:16px;border-top:1px solid #fff;border-left:1px solid #fff;border-right:1px solid #808080;border-bottom:1px solid #808080"></div>
<div class="t" style="left:654px;top:266px;letter-spacing:-0.2px;">Promised</div>
<div class="a" style="left:711px;top:262px;width:64px;height:16px;border-top:1px solid #fff;border-left:1px solid #fff;border-right:1px solid #808080;border-bottom:1px solid #808080"></div>
<div class="t" style="left:714px;top:266px;letter-spacing:-0.2px;">Customer ID</div>
<div class="a" style="left:775px;top:262px;width:144px;height:16px;border-top:1px solid #fff;border-left:1px solid #fff;border-right:1px solid #808080;border-bottom:1px solid #808080"></div>
<div class="t" style="left:778px;top:266px;letter-spacing:-0.2px;">Customer Name</div>
<div class="a" style="left:919px;top:262px;width:64px;height:16px;border-top:1px solid #fff;border-left:1px solid #fff;border-right:1px solid #808080;border-bottom:1px solid #808080"></div>
<div class="t" style="left:922px;top:266px;letter-spacing:-0.2px;">Stock #</div>
<div class="a" style="left:983px;top:262px;width:80px;height:16px;border-top:1px solid #fff;border-left:1px solid #fff;border-right:1px solid #808080;border-bottom:1px solid #808080"></div>
<div class="t" style="left:986px;top:266px;letter-spacing:-0.2px;">Author</div>
<div class="a" style="left:1063px;top:262px;width:99px;height:16px;border-top:1px solid #fff;border-left:1px solid #fff;border-right:1px solid #808080;border-bottom:1px solid #808080"></div>
<div class="t" style="left:1066px;top:266px;letter-spacing:-0.2px;">Status</div>
<div class="a" style="left:403px;top:278px;width:759px;height:16px;background:#fff;border-bottom:1px solid #808080"></div>
<div class="a" style="left:466px;top:278px;width:1px;height:16px;background:#808080"></div>
<div class="t" style="left:406px;top:282px;letter-spacing:-0.2px;font-size:11.5px">105083</div>
<div class="a" style="left:530px;top:278px;width:1px;height:16px;background:#808080"></div>
<div class="t" style="left:470px;top:282px;letter-spacing:-0.2px;font-size:11.5px">IH</div>
<div class="a" style="left:590px;top:278px;width:1px;height:16px;background:#808080"></div>
<div class="a" style="left:650px;top:278px;width:1px;height:16px;background:#808080"></div>
<div class="t" style="left:594px;top:282px;letter-spacing:-0.2px;font-size:11.5px">27 AUG 12</div>
<div class="a" style="left:710px;top:278px;width:1px;height:16px;background:#808080"></div>
<div class="t" style="left:654px;top:282px;letter-spacing:-0.2px;font-size:11.5px">01 SEP 12</div>
<div class="a" style="left:774px;top:278px;width:1px;height:16px;background:#808080"></div>
<div class="t" style="left:714px;top:282px;letter-spacing:-0.2px;font-size:11.5px">1000</div>
<div class="a" style="left:918px;top:278px;width:1px;height:16px;background:#808080"></div>
<div class="t" style="left:778px;top:282px;letter-spacing:-0.2px;font-size:11.5px">SUNRISE RV</div>
<div class="a" style="left:982px;top:278px;width:1px;height:16px;background:#808080"></div>
<div class="t" style="left:922px;top:282px;letter-spacing:-0.2px;font-size:11.5px">1537</div>
<div class="a" style="left:1062px;top:278px;width:1px;height:16px;background:#808080"></div>
<div class="t" style="left:986px;top:282px;letter-spacing:-0.2px;font-size:11.5px">G.DEWALT</div>
<div class="a" style="left:1161px;top:278px;width:1px;height:16px;background:#808080"></div>
<div class="t" style="left:1066px;top:282px;letter-spacing:-0.2px;font-size:11.5px">NEW</div>
<div class="a" style="left:403px;top:294px;width:759px;height:16px;background:#d4d0c8;border-bottom:1px solid #808080"></div>
<div class="a" style="left:466px;top:294px;width:1px;height:16px;background:#808080"></div>
<div class="t" style="left:406px;top:298px;letter-spacing:-0.2px;font-size:11.5px">105084</div>
<div class="a" style="left:530px;top:294px;width:1px;height:16px;background:#808080"></div>
<div class="t" style="left:470px;top:298px;letter-spacing:-0.2px;font-size:11.5px">IH</div>
<div class="a" style="left:590px;top:294px;width:1px;height:16px;background:#808080"></div>
<div class="a" style="left:650px;top:294px;width:1px;height:16px;background:#808080"></div>
<div class="t" style="left:594px;top:298px;letter-spacing:-0.2px;font-size:11.5px">27 AUG 12</div>
<div class="a" style="left:710px;top:294px;width:1px;height:16px;background:#808080"></div>
<div class="t" style="left:654px;top:298px;letter-spacing:-0.2px;font-size:11.5px">30 AUG 12</div>
<div class="a" style="left:774px;top:294px;width:1px;height:16px;background:#808080"></div>
<div class="t" style="left:714px;top:298px;letter-spacing:-0.2px;font-size:11.5px">1034</div>
<div class="a" style="left:918px;top:294px;width:1px;height:16px;background:#808080"></div>
<div class="t" style="left:778px;top:298px;letter-spacing:-0.2px;font-size:11.5px">UNGER, ED</div>
<div class="a" style="left:982px;top:294px;width:1px;height:16px;background:#808080"></div>
<div class="t" style="left:922px;top:298px;letter-spacing:-0.2px;font-size:11.5px">1018</div>
<div class="a" style="left:1062px;top:294px;width:1px;height:16px;background:#808080"></div>
<div class="t" style="left:986px;top:298px;letter-spacing:-0.2px;font-size:11.5px">DEMO8</div>
<div class="a" style="left:1161px;top:294px;width:1px;height:16px;background:#808080"></div>
<div class="t" style="left:1066px;top:298px;letter-spacing:-0.2px;font-size:11.5px">NEW</div>
<div class="a" style="left:403px;top:310px;width:759px;height:16px;background:#fff;border-bottom:1px solid #808080"></div>
<div class="a" style="left:466px;top:310px;width:1px;height:16px;background:#808080"></div>
<div class="t" style="left:406px;top:314px;letter-spacing:-0.2px;font-size:11.5px">105085</div>
<div class="a" style="left:530px;top:310px;width:1px;height:16px;background:#808080"></div>
<div class="t" style="left:470px;top:314px;letter-spacing:-0.2px;font-size:11.5px">IH</div>
<div class="a" style="left:590px;top:310px;width:1px;height:16px;background:#808080"></div>
<div class="a" style="left:650px;top:310px;width:1px;height:16px;background:#808080"></div>
<div class="t" style="left:594px;top:314px;letter-spacing:-0.2px;font-size:11.5px">27 AUG 12</div>
<div class="a" style="left:710px;top:310px;width:1px;height:16px;background:#808080"></div>
<div class="t" style="left:654px;top:314px;letter-spacing:-0.2px;font-size:11.5px">30 AUG 12</div>
<div class="a" style="left:774px;top:310px;width:1px;height:16px;background:#808080"></div>
<div class="t" style="left:714px;top:314px;letter-spacing:-0.2px;font-size:11.5px">1504</div>
<div class="a" style="left:918px;top:310px;width:1px;height:16px;background:#808080"></div>
<div class="t" style="left:778px;top:314px;letter-spacing:-0.2px;font-size:11.5px">TRIPANIER, BRENT</div>
<div class="a" style="left:982px;top:310px;width:1px;height:16px;background:#808080"></div>
<div class="a" style="left:1062px;top:310px;width:1px;height:16px;background:#808080"></div>
<div class="t" style="left:986px;top:314px;letter-spacing:-0.2px;font-size:11.5px">G.DEWALT</div>
<div class="a" style="left:1161px;top:310px;width:1px;height:16px;background:#808080"></div>
<div class="t" style="left:1066px;top:314px;letter-spacing:-0.2px;font-size:11.5px">NEW</div>
<div class="a" style="left:403px;top:326px;width:759px;height:16px;background:#d4d0c8;border-bottom:1px solid #808080"></div>
<div class="a" style="left:466px;top:326px;width:1px;height:16px;background:#808080"></div>
<div class="t" style="left:406px;top:330px;letter-spacing:-0.2px;font-size:11.5px">105082</div>
<div class="a" style="left:530px;top:326px;width:1px;height:16px;background:#808080"></div>
<div class="t" style="left:470px;top:330px;letter-spacing:-0.2px;font-size:11.5px">IN HOUSE</div>
<div class="a" style="left:590px;top:326px;width:1px;height:16px;background:#808080"></div>
<div class="a" style="left:650px;top:326px;width:1px;height:16px;background:#808080"></div>
<div class="t" style="left:594px;top:330px;letter-spacing:-0.2px;font-size:11.5px">24 AUG 12</div>
<div class="a" style="left:710px;top:326px;width:1px;height:16px;background:#808080"></div>
<div class="t" style="left:654px;top:330px;letter-spacing:-0.2px;font-size:11.5px">10 AUG 12</div>
<div class="a" style="left:774px;top:326px;width:1px;height:16px;background:#808080"></div>
<div class="t" style="left:714px;top:330px;letter-spacing:-0.2px;font-size:11.5px">1056</div>
<div class="a" style="left:918px;top:326px;width:1px;height:16px;background:#808080"></div>
<div class="t" style="left:778px;top:330px;letter-spacing:-0.2px;font-size:11.5px">SCHEID, CLARENCE</div>
<div class="a" style="left:982px;top:326px;width:1px;height:16px;background:#808080"></div>
<div class="t" style="left:922px;top:330px;letter-spacing:-0.2px;font-size:11.5px">1369</div>
<div class="a" style="left:1062px;top:326px;width:1px;height:16px;background:#808080"></div>
<div class="t" style="left:986px;top:330px;letter-spacing:-0.2px;font-size:11.5px">DEMO3</div>
<div class="a" style="left:1161px;top:326px;width:1px;height:16px;background:#808080"></div>
<div class="t" style="left:1066px;top:330px;letter-spacing:-0.2px;font-size:11.5px">NEW</div>
<div class="a" style="left:403px;top:342px;width:759px;height:16px;background:#fff;border-bottom:1px solid #808080"></div>
<div class="a" style="left:466px;top:342px;width:1px;height:16px;background:#808080"></div>
<div class="t" style="left:406px;top:346px;letter-spacing:-0.2px;font-size:11.5px">105081</div>
<div class="a" style="left:530px;top:342px;width:1px;height:16px;background:#808080"></div>
<div class="t" style="left:470px;top:346px;letter-spacing:-0.2px;font-size:11.5px">IH</div>
<div class="a" style="left:590px;top:342px;width:1px;height:16px;background:#808080"></div>
<div class="t" style="left:534px;top:346px;letter-spacing:-0.2px;font-size:11.5px">1137</div>
<div class="a" style="left:650px;top:342px;width:1px;height:16px;background:#808080"></div>
<div class="t" style="left:594px;top:346px;letter-spacing:-0.2px;font-size:11.5px">23 AUG 12</div>
<div class="a" style="left:710px;top:342px;width:1px;height:16px;background:#808080"></div>
<div class="t" style="left:654px;top:346px;letter-spacing:-0.2px;font-size:11.5px">01 OCT 12</div>
<div class="a" style="left:774px;top:342px;width:1px;height:16px;background:#808080"></div>
<div class="t" style="left:714px;top:346px;letter-spacing:-0.2px;font-size:11.5px">1537</div>
<div class="a" style="left:918px;top:342px;width:1px;height:16px;background:#808080"></div>
<div class="t" style="left:778px;top:346px;letter-spacing:-0.2px;font-size:11.5px">HIGGINS, JONATHAN</div>
<div class="a" style="left:982px;top:342px;width:1px;height:16px;background:#808080"></div>
<div class="a" style="left:1062px;top:342px;width:1px;height:16px;background:#808080"></div>
<div class="t" style="left:986px;top:346px;letter-spacing:-0.2px;font-size:11.5px">G.DEWALT</div>
<div class="a" style="left:1161px;top:342px;width:1px;height:16px;background:#808080"></div>
<div class="t" style="left:1066px;top:346px;letter-spacing:-0.2px;font-size:11.5px">NEW</div>
<div class="a" style="left:403px;top:358px;width:759px;height:16px;background:#d4d0c8;border-bottom:1px solid #808080"></div>
<div class="a" style="left:466px;top:358px;width:1px;height:16px;background:#808080"></div>
<div class="t" style="left:406px;top:362px;letter-spacing:-0.2px;font-size:11.5px">105079</div>
<div class="a" style="left:530px;top:358px;width:1px;height:16px;background:#808080"></div>
<div class="t" style="left:470px;top:362px;letter-spacing:-0.2px;font-size:11.5px">IH</div>
<div class="a" style="left:590px;top:358px;width:1px;height:16px;background:#808080"></div>
<div class="t" style="left:534px;top:362px;letter-spacing:-0.2px;font-size:11.5px">1132</div>
<div class="a" style="left:650px;top:358px;width:1px;height:16px;background:#808080"></div>
<div class="t" style="left:594px;top:362px;letter-spacing:-0.2px;font-size:11.5px">21 AUG 12</div>
<div class="a" style="left:710px;top:358px;width:1px;height:16px;background:#808080"></div>
<div class="a" style="left:774px;top:358px;width:1px;height:16px;background:#808080"></div>
<div class="t" style="left:714px;top:362px;letter-spacing:-0.2px;font-size:11.5px">1270</div>
<div class="a" style="left:918px;top:358px;width:1px;height:16px;background:#808080"></div>
<div class="t" style="left:778px;top:362px;letter-spacing:-0.2px;font-size:11.5px">TWAIN, MARK</div>
<div class="a" style="left:982px;top:358px;width:1px;height:16px;background:#808080"></div>
<div class="t" style="left:922px;top:362px;letter-spacing:-0.2px;font-size:11.5px">1268</div>
<div class="a" style="left:1062px;top:358px;width:1px;height:16px;background:#808080"></div>
<div class="t" style="left:986px;top:362px;letter-spacing:-0.2px;font-size:11.5px">DEMO6</div>
<div class="a" style="left:1161px;top:358px;width:1px;height:16px;background:#808080"></div>
<div class="t" style="left:1066px;top:362px;letter-spacing:-0.2px;font-size:11.5px">NEW</div>
<div class="a" style="left:403px;top:374px;width:759px;height:16px;background:#fff;border-bottom:1px solid #808080"></div>
<div class="a" style="left:466px;top:374px;width:1px;height:16px;background:#808080"></div>
<div class="t" style="left:406px;top:378px;letter-spacing:-0.2px;font-size:11.5px">105077</div>
<div class="a" style="left:530px;top:374px;width:1px;height:16px;background:#808080"></div>
<div class="t" style="left:470px;top:378px;letter-spacing:-0.2px;font-size:11.5px">IH</div>
<div class="a" style="left:590px;top:374px;width:1px;height:16px;background:#808080"></div>
<div class="a" style="left:650px;top:374px;width:1px;height:16px;background:#808080"></div>
<div class="t" style="left:594px;top:378px;letter-spacing:-0.2px;font-size:11.5px">17 AUG 12</div>
<div class="a" style="left:710px;top:374px;width:1px;height:16px;background:#808080"></div>
<div class="t" style="left:654px;top:378px;letter-spacing:-0.2px;font-size:11.5px">31 AUG 12</div>
<div class="a" style="left:774px;top:374px;width:1px;height:16px;background:#808080"></div>
<div class="t" style="left:714px;top:378px;letter-spacing:-0.2px;font-size:11.5px">1417</div>
<div class="a" style="left:918px;top:374px;width:1px;height:16px;background:#808080"></div>
<div class="t" style="left:778px;top:378px;letter-spacing:-0.2px;font-size:11.5px">DEWALT, GREG</div>
<div class="a" style="left:982px;top:374px;width:1px;height:16px;background:#808080"></div>
<div class="t" style="left:922px;top:378px;letter-spacing:-0.2px;font-size:11.5px">1253</div>
<div class="a" style="left:1062px;top:374px;width:1px;height:16px;background:#808080"></div>
<div class="t" style="left:986px;top:378px;letter-spacing:-0.2px;font-size:11.5px">DEMO8</div>
<div class="a" style="left:1161px;top:374px;width:1px;height:16px;background:#808080"></div>
<div class="t" style="left:1066px;top:378px;letter-spacing:-0.2px;font-size:11.5px">NEW</div>
<div class="a" style="left:403px;top:390px;width:759px;height:16px;background:#d4d0c8;border-bottom:1px solid #808080"></div>
<div class="a" style="left:466px;top:390px;width:1px;height:16px;background:#808080"></div>
<div class="t" style="left:406px;top:394px;letter-spacing:-0.2px;font-size:11.5px">105070</div>
<div class="a" style="left:530px;top:390px;width:1px;height:16px;background:#808080"></div>
<div class="t" style="left:470px;top:394px;letter-spacing:-0.2px;font-size:11.5px">IN HOUSE</div>
<div class="a" style="left:590px;top:390px;width:1px;height:16px;background:#808080"></div>
<div class="a" style="left:650px;top:390px;width:1px;height:16px;background:#808080"></div>
<div class="t" style="left:594px;top:394px;letter-spacing:-0.2px;font-size:11.5px">09 AUG 12</div>
<div class="a" style="left:710px;top:390px;width:1px;height:16px;background:#808080"></div>
<div class="t" style="left:654px;top:394px;letter-spacing:-0.2px;font-size:11.5px">09 AUG 12</div>
<div class="a" style="left:774px;top:390px;width:1px;height:16px;background:#808080"></div>
<div class="t" style="left:714px;top:394px;letter-spacing:-0.2px;font-size:11.5px">1524</div>
<div class="a" style="left:918px;top:390px;width:1px;height:16px;background:#808080"></div>
<div class="t" style="left:778px;top:394px;letter-spacing:-0.2px;font-size:11.5px">NOLAN, DANA</div>
<div class="a" style="left:982px;top:390px;width:1px;height:16px;background:#808080"></div>
<div class="t" style="left:922px;top:394px;letter-spacing:-0.2px;font-size:11.5px">1508</div>
<div class="a" style="left:1062px;top:390px;width:1px;height:16px;background:#808080"></div>
<div class="t" style="left:986px;top:394px;letter-spacing:-0.2px;font-size:11.5px">DEMO1</div>
<div class="a" style="left:1161px;top:390px;width:1px;height:16px;background:#808080"></div>
<div class="t" style="left:1066px;top:394px;letter-spacing:-0.2px;font-size:11.5px">NEW</div>
<div class="a" style="left:403px;top:406px;width:759px;height:16px;background:#fff;border-bottom:1px solid #808080"></div>
<div class="a" style="left:466px;top:406px;width:1px;height:16px;background:#808080"></div>
<div class="t" style="left:406px;top:410px;letter-spacing:-0.2px;font-size:11.5px">105071</div>
<div class="a" style="left:530px;top:406px;width:1px;height:16px;background:#808080"></div>
<div class="t" style="left:470px;top:410px;letter-spacing:-0.2px;font-size:11.5px">IH</div>
<div class="a" style="left:590px;top:406px;width:1px;height:16px;background:#808080"></div>
<div class="a" style="left:650px;top:406px;width:1px;height:16px;background:#808080"></div>
<div class="t" style="left:594px;top:410px;letter-spacing:-0.2px;font-size:11.5px">09 AUG 12</div>
<div class="a" style="left:710px;top:406px;width:1px;height:16px;background:#808080"></div>
<div class="a" style="left:774px;top:406px;width:1px;height:16px;background:#808080"></div>
<div class="t" style="left:714px;top:410px;letter-spacing:-0.2px;font-size:11.5px">1234</div>
<div class="a" style="left:918px;top:406px;width:1px;height:16px;background:#808080"></div>
<div class="t" style="left:778px;top:410px;letter-spacing:-0.2px;font-size:11.5px">KLIEBERN, JAY</div>
<div class="a" style="left:982px;top:406px;width:1px;height:16px;background:#808080"></div>
<div class="t" style="left:922px;top:410px;letter-spacing:-0.2px;font-size:11.5px">1502</div>
<div class="a" style="left:1062px;top:406px;width:1px;height:16px;background:#808080"></div>
<div class="t" style="left:986px;top:410px;letter-spacing:-0.2px;font-size:11.5px">DEMO1</div>
<div class="a" style="left:1161px;top:406px;width:1px;height:16px;background:#808080"></div>
<div class="t" style="left:1066px;top:410px;letter-spacing:-0.2px;font-size:11.5px">NEW</div>
<div class="a" style="left:403px;top:422px;width:759px;height:16px;background:#d4d0c8;border-bottom:1px solid #808080"></div>
<div class="a" style="left:466px;top:422px;width:1px;height:16px;background:#808080"></div>
<div class="t" style="left:406px;top:426px;letter-spacing:-0.2px;font-size:11.5px">105072</div>
<div class="a" style="left:530px;top:422px;width:1px;height:16px;background:#808080"></div>
<div class="t" style="left:470px;top:426px;letter-spacing:-0.2px;font-size:11.5px">IH</div>
<div class="a" style="left:590px;top:422px;width:1px;height:16px;background:#808080"></div>
<div class="a" style="left:650px;top:422px;width:1px;height:16px;background:#808080"></div>
<div class="t" style="left:594px;top:426px;letter-spacing:-0.2px;font-size:11.5px">09 AUG 12</div>
<div class="a" style="left:710px;top:422px;width:1px;height:16px;background:#808080"></div>
<div class="t" style="left:654px;top:426px;letter-spacing:-0.2px;font-size:11.5px">24 AUG 12</div>
<div class="a" style="left:774px;top:422px;width:1px;height:16px;background:#808080"></div>
<div class="t" style="left:714px;top:426px;letter-spacing:-0.2px;font-size:11.5px">1234</div>
<div class="a" style="left:918px;top:422px;width:1px;height:16px;background:#808080"></div>
<div class="t" style="left:778px;top:426px;letter-spacing:-0.2px;font-size:11.5px">KLIEBERN, JAY</div>
<div class="a" style="left:982px;top:422px;width:1px;height:16px;background:#808080"></div>
<div class="t" style="left:922px;top:426px;letter-spacing:-0.2px;font-size:11.5px">1502</div>
<div class="a" style="left:1062px;top:422px;width:1px;height:16px;background:#808080"></div>
<div class="t" style="left:986px;top:426px;letter-spacing:-0.2px;font-size:11.5px">DEMO8</div>
<div class="a" style="left:1161px;top:422px;width:1px;height:16px;background:#808080"></div>
<div class="t" style="left:1066px;top:426px;letter-spacing:-0.2px;font-size:11.5px">NEW</div>
<div class="a" style="left:403px;top:438px;width:759px;height:16px;background:#fff;border-bottom:1px solid #808080"></div>
<div class="a" style="left:466px;top:438px;width:1px;height:16px;background:#808080"></div>
<div class="t" style="left:406px;top:442px;letter-spacing:-0.2px;font-size:11.5px">105069</div>
<div class="a" style="left:530px;top:438px;width:1px;height:16px;background:#808080"></div>
<div class="t" style="left:470px;top:442px;letter-spacing:-0.2px;font-size:11.5px">IN HOUSE</div>
<div class="a" style="left:590px;top:438px;width:1px;height:16px;background:#808080"></div>
<div class="a" style="left:650px;top:438px;width:1px;height:16px;background:#808080"></div>
<div class="t" style="left:594px;top:442px;letter-spacing:-0.2px;font-size:11.5px">01 AUG 12</div>
<div class="a" style="left:710px;top:438px;width:1px;height:16px;background:#808080"></div>
<div class="t" style="left:654px;top:442px;letter-spacing:-0.2px;font-size:11.5px">10 AUG 12</div>
<div class="a" style="left:774px;top:438px;width:1px;height:16px;background:#808080"></div>
<div class="t" style="left:714px;top:442px;letter-spacing:-0.2px;font-size:11.5px">1521</div>
<div class="a" style="left:918px;top:438px;width:1px;height:16px;background:#808080"></div>
<div class="t" style="left:778px;top:442px;letter-spacing:-0.2px;font-size:11.5px">ANDERSON, MIKE</div>
<div class="a" style="left:982px;top:438px;width:1px;height:16px;background:#808080"></div>
<div class="t" style="left:922px;top:442px;letter-spacing:-0.2px;font-size:11.5px">1518</div>
<div class="a" style="left:1062px;top:438px;width:1px;height:16px;background:#808080"></div>
<div class="t" style="left:986px;top:442px;letter-spacing:-0.2px;font-size:11.5px">DEMO7</div>
<div class="a" style="left:1161px;top:438px;width:1px;height:16px;background:#808080"></div>
<div class="t" style="left:1066px;top:442px;letter-spacing:-0.2px;font-size:11.5px">NEW</div>
<div class="a" style="left:403px;top:278px;width:63px;height:16px;border:2px solid #0a246a;border-right-width:1px"></div>
<div class="a" style="left:1162px;top:262px;width:16px;height:192px;background:repeating-conic-gradient(#fff 0 25%,#d4d0c8 0 50%) 0 0/2px 2px"></div>
<div class="btn" style="left:1162px;top:262px;width:16px;height:16px"></div>
<div class="btn" style="left:1162px;top:438px;width:16px;height:16px"></div>
<div class="btn" style="left:1162px;top:278px;width:16px;height:17px"></div>
<svg class="a" style="left:1166px;top:267px" width="7" height="4" viewBox="0 0 7 4"><path d="M0 4 L3.5 0 L7 4 Z" fill="#000"/></svg>
<svg class="a" style="left:1166px;top:444px" width="7" height="4" viewBox="0 0 7 4"><path d="M0 0 L3.5 4 L7 0 Z" fill="#000"/></svg>
<div class="a" style="left:401px;top:466px;width:778px;height:104px;border:1px solid #808080;box-shadow:inset 1px 1px 0 #fff,1px 1px 0 #fff"></div>
<div class="t" style="left:408px;top:461px;background:#d4d0c8;padding:0 2px;letter-spacing:-0.2px;line-height:12px">Work Order Header</div>
<div class="t" style="right:724px;top:481px;letter-spacing:-0.2px;">WO Number</div>
<div class="sunk" style="left:481px;top:476px;width:76px;height:23px;background:#d4d0c8"></div>
<div class="t" style="left:484px;top:480px;letter-spacing:-0.2px;font-size:11px">105083</div>
<div class="t" style="right:592px;top:481px;letter-spacing:-0.2px;">Status</div>
<div class="sunk" style="left:608px;top:476px;width:121px;height:23px;background:#d4d0c8"></div>
<div class="t" style="left:611px;top:480px;letter-spacing:-0.2px;font-size:11px">NEW</div>
<div class="t" style="right:411px;top:481px;letter-spacing:-0.2px;">Date</div>
<div class="sunk" style="left:793px;top:476px;width:80px;height:23px;background:#d4d0c8"></div>
<div class="t" style="left:796px;top:480px;letter-spacing:-0.2px;font-size:11px">27 AUG 12</div>
<div class="t" style="right:251px;top:481px;letter-spacing:-0.2px;">Parts Total</div>
<div class="sunk" style="left:953px;top:476px;width:68px;height:23px;background:#d4d0c8"></div>
<div class="t" style="right:179px;top:480px;letter-spacing:-0.2px;font-size:11px">0.00</div>
<div class="t" style="right:107px;top:481px;letter-spacing:-0.2px;">Extras Total</div>
<div class="sunk" style="left:1097px;top:476px;width:68px;height:23px;background:#d4d0c8"></div>
<div class="t" style="right:35px;top:480px;letter-spacing:-0.2px;font-size:11px">0.00</div>
<div class="t" style="right:724px;top:513px;letter-spacing:-0.2px;">Customer</div>
<div class="sunk" style="left:481px;top:508px;width:248px;height:23px;background:#d4d0c8"></div>
<div class="t" style="left:484px;top:512px;letter-spacing:-0.2px;font-size:11px">1000 - SUNRISE RV</div>
<div class="t" style="right:411px;top:513px;letter-spacing:-0.2px;">Author</div>
<div class="sunk" style="left:793px;top:508px;width:80px;height:23px;background:#d4d0c8"></div>
<div class="t" style="left:796px;top:512px;letter-spacing:-0.2px;font-size:11px">1537</div>
<div class="t" style="right:251px;top:513px;letter-spacing:-0.2px;">Labor Total</div>
<div class="sunk" style="left:953px;top:508px;width:68px;height:23px;background:#d4d0c8"></div>
<div class="t" style="right:179px;top:512px;letter-spacing:-0.2px;font-size:11px">0.00</div>
<div class="t" style="right:107px;top:513px;letter-spacing:-0.2px;">Tax Total</div>
<div class="sunk" style="left:1097px;top:508px;width:68px;height:23px;background:#d4d0c8"></div>
<div class="t" style="right:35px;top:512px;letter-spacing:-0.2px;font-size:11px">0.00</div>
<div class="t" style="right:724px;top:545px;letter-spacing:-0.2px;">Stock</div>
<div class="sunk" style="left:481px;top:540px;width:248px;height:23px;background:#d4d0c8"></div>
<div class="t" style="left:484px;top:544px;letter-spacing:-0.2px;font-size:11px">1537 2013 WB SUPRA LAUNCH 22V</div>
<div class="t" style="right:411px;top:545px;letter-spacing:-0.2px;">Location</div>
<div class="sunk" style="left:793px;top:540px;width:80px;height:23px;background:#d4d0c8"></div>
<div class="t" style="left:796px;top:544px;letter-spacing:-0.2px;font-size:11px">IH</div>
<div class="t" style="right:251px;top:545px;letter-spacing:-0.2px;">Sublet Total</div>
<div class="sunk" style="left:953px;top:540px;width:68px;height:23px;background:#d4d0c8"></div>
<div class="t" style="right:179px;top:544px;letter-spacing:-0.2px;font-size:11px">0.00</div>
<div class="t" style="right:107px;top:545px;letter-spacing:-0.2px;">Total</div>
<div class="sunk" style="left:1097px;top:540px;width:68px;height:23px;background:#d4d0c8"></div>
<div class="t" style="right:35px;top:544px;letter-spacing:-0.2px;font-size:11px">0.00</div>
<div class="a" style="left:185px;top:586px;width:998px;height:212px;border:1px solid #808080;box-shadow:inset 1px 1px 0 #fff,1px 1px 0 #fff"></div>
<div class="t" style="left:192px;top:581px;background:#d4d0c8;padding:0 2px;letter-spacing:-0.2px;line-height:12px">Line Items</div>
<div class="a" style="left:193px;top:596px;width:984px;height:196px;background:#808080;border-top:1px solid #808080;border-left:1px solid #808080;border-bottom:1px solid #fff;border-right:1px solid #fff;box-shadow:inset 1px 1px 0 #404040"></div>
<div class="a" style="left:195px;top:598px;width:81px;height:16px;background:#d4d0c8;border-top:1px solid #fff;border-left:1px solid #fff;border-right:1px solid #808080;border-bottom:1px solid #808080"></div>
<div class="t" style="left:198px;top:602px;letter-spacing:-0.2px;">Job</div>
<div class="a" style="left:275px;top:598px;width:442px;height:16px;background:#d4d0c8;border-top:1px solid #fff;border-left:1px solid #fff;border-right:1px solid #808080;border-bottom:1px solid #808080"></div>
<div class="t" style="left:278px;top:602px;letter-spacing:-0.2px;">Description</div>
<div class="a" style="left:716px;top:598px;width:31px;height:16px;background:#d4d0c8;border-top:1px solid #fff;border-left:1px solid #fff;border-right:1px solid #808080;border-bottom:1px solid #808080"></div>
<div class="t" style="left:719px;top:602px;letter-spacing:-0.2px;">Type</div>
<div class="a" style="left:746px;top:598px;width:66px;height:16px;background:#d4d0c8;border-top:1px solid #fff;border-left:1px solid #fff;border-right:1px solid #808080;border-bottom:1px solid #808080"></div>
<div class="t" style="left:749px;top:602px;letter-spacing:-0.2px;">Bill Code</div>
<div class="a" style="left:811px;top:598px;width:56px;height:16px;background:#d4d0c8;border-top:1px solid #fff;border-left:1px solid #fff;border-right:1px solid #808080;border-bottom:1px solid #808080"></div>
<div class="t" style="left:814px;top:602px;letter-spacing:-0.2px;">Tax Code</div>
<div class="a" style="left:866px;top:598px;width:145px;height:16px;background:#d4d0c8;border-top:1px solid #fff;border-left:1px solid #fff;border-right:1px solid #808080;border-bottom:1px solid #808080"></div>
<div class="t" style="left:869px;top:602px;letter-spacing:-0.2px;">Job Status</div>
<div class="a" style="left:1010px;top:598px;width:74px;height:16px;background:#d4d0c8;border-top:1px solid #fff;border-left:1px solid #fff;border-right:1px solid #808080;border-bottom:1px solid #808080"></div>
<div class="t" style="right:117px;top:602px;letter-spacing:-0.2px;">Estimated Amt</div>
<div class="a" style="left:1083px;top:598px;width:93px;height:16px;background:#d4d0c8;border-top:1px solid #fff;border-left:1px solid #fff;border-right:1px solid #808080;border-bottom:1px solid #808080"></div>
<div class="t" style="right:25px;top:602px;letter-spacing:-0.2px;">Actual Amt</div>
<div class="a" style="left:195px;top:614px;width:980px;height:16px;background:#fff;border-bottom:1px solid #404040"></div>
<div class="a" style="left:275px;top:614px;width:1px;height:16px;background:#808080"></div>
<div class="t" style="left:198px;top:618px;width:77px;overflow:hidden;letter-spacing:-0.2px">1</div>
<div class="a" style="left:716px;top:614px;width:1px;height:16px;background:#808080"></div>
<div class="t" style="left:278px;top:618px;width:438px;overflow:hidden;letter-spacing:-0.2px">Unit had fiberglass damage when pulling unit into the bay.|John Smith hit a pole|Repaired Fib</div>
<div class="a" style="left:746px;top:614px;width:1px;height:16px;background:#808080"></div>
<div class="t" style="left:719px;top:618px;width:27px;overflow:hidden;letter-spacing:-0.2px">I</div>
<div class="a" style="left:811px;top:614px;width:1px;height:16px;background:#808080"></div>
<div class="t" style="left:749px;top:618px;width:62px;overflow:hidden;letter-spacing:-0.2px">I</div>
<div class="a" style="left:866px;top:614px;width:1px;height:16px;background:#808080"></div>
<div class="t" style="left:814px;top:618px;width:52px;overflow:hidden;letter-spacing:-0.2px">EXE</div>
<div class="a" style="left:1010px;top:614px;width:1px;height:16px;background:#808080"></div>
<div class="a" style="left:1083px;top:614px;width:1px;height:16px;background:#808080"></div>
<div class="t" style="right:117px;top:618px;letter-spacing:-0.2px;">0.00</div>
<div class="a" style="left:1175px;top:614px;width:1px;height:16px;background:#808080"></div>
<div class="t" style="right:25px;top:618px;letter-spacing:-0.2px;">0.00</div>
<div class="a" style="left:174px;top:812px;width:1017px;height:1px;background:#d4d0c8"></div>
<div class="a" style="left:176px;top:813px;width:174px;height:14px;border-top:1px solid #000;border-left:1px solid #000"></div>
<div class="a" style="left:352px;top:813px;width:54px;height:14px;border-top:1px solid #000;border-left:1px solid #000"></div>
<div class="a" style="left:408px;top:813px;width:782px;height:14px;border-top:1px solid #000;border-left:1px solid #000"></div>
<div class="t" style="left:199px;top:816px;color:#4a6090;letter-spacing:-0.3px;font-size:11px">SRV | PC3 | 6484 | DEMO7</div>
</body></html>
